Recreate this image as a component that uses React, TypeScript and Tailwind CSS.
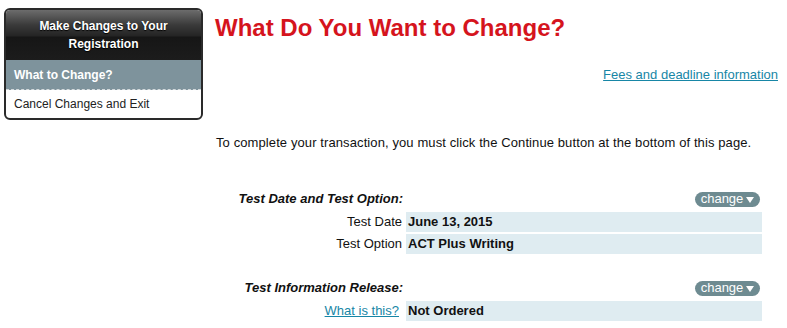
import React from 'react';

const font = "font-['Liberation_Sans',Arial,Helvetica,sans-serif]";

interface Row {
  label: React.ReactNode;
  value: string;
}

const ChangePill: React.FC = () => (
  <span className="mr-[2px] flex h-[15px] w-[65px] items-center justify-center gap-[3px] rounded-full bg-[#6e8b91] text-[13px] leading-none text-white">
    <span className="-mt-[1px]">change</span>
    <svg width="8" height="6" viewBox="0 0 8 6" className="mt-[1px]">
      <path d="M0 0 H8 L4 6 Z" fill="#fff" />
    </svg>
  </span>
);

const Section: React.FC<{ title: string; rows: Row[]; className?: string }> = ({ title, rows, className }) => (
  <div className={`ml-[25px] w-[522px] ${className ?? ''}`}>
    <div className="grid h-[16px] grid-cols-[164px_356px] items-center gap-x-[2px]">
      <div className="flex justify-end pr-[1px]">
        <span className="whitespace-nowrap text-[13px] font-bold italic leading-[16px] text-[#111]">{title}</span>
      </div>
      <div className="flex justify-end">
        <ChangePill />
      </div>
    </div>
    <div className="mt-[5px] grid grid-cols-[164px_356px] gap-[2px]">
      {rows.map((row, i) => (
        <React.Fragment key={i}>
          <div className="pr-[2px] text-right text-[13px] leading-[20px] text-[#111]">{row.label}</div>
          <div className="bg-[#dfecf1] pl-[2px] text-[13px] font-bold leading-[20px] text-[#111]">{row.value}</div>
        </React.Fragment>
      ))}
    </div>
  </div>
);

export default function App() {
  return (
    <div className={`flex min-h-[328px] w-[787px] items-start bg-white ${font}`}>
      {/* Side menu */}
      <div className="ml-[4px] mt-[8px] w-[199px] overflow-hidden rounded-[6px] border-2 border-[#2a2a2a] bg-white">
        <div className="flex h-[50px] flex-col items-center justify-center bg-[linear-gradient(to_bottom,#6c6c6c_0%,#3a3a3a_30%,#242424_52%,#161616_54%,#1c1c1c_100%)] text-center text-[12px] font-bold leading-[18px] text-white [text-shadow:0_1px_1px_#000]">
          <span>Make Changes to Your</span>
          <span>Registration</span>
        </div>
        <div className="flex h-[30px] items-center border-b border-dashed border-[#d3d9dc] bg-[#7e939c] pl-[8px] text-[12px] font-bold text-white">
          What to Change?
        </div>
        <div className="flex h-[28px] items-center pl-[8px] text-[12px] text-[#222]">
          Cancel Changes and Exit
        </div>
      </div>

      {/* Main content */}
      <div className="ml-[12px] w-[563px] pt-[14px]">
        <h1 className="text-[24px] font-bold leading-[28px] text-[#d5141d]">What Do You Want to Change?</h1>
        <div className="mt-[25px] flex justify-end">
          <a href="#" className="text-[13px] leading-[16px] text-[#1786a6] underline">
            Fees and deadline information
          </a>
        </div>
        <p className="mt-[52px] pl-[1px] text-[13px] leading-[16px] tracking-[0.1px] text-[#111]">
          To complete your transaction, you must click the Continue button at the bottom of this page.
        </p>

        <Section
          className="mt-[40px]"
          title="Test Date and Test Option:"
          rows={[
            { label: 'Test Date', value: 'June 13, 2015' },
            { label: 'Test Option', value: 'ACT Plus Writing' },
          ]}
        />

        <Section
          className="mt-[26px]"
          title="Test Information Release:"
          rows={[
            {
              label: (
                <a href="#" className="mr-[3px] text-[#1786a6] underline">
                  What is this?
                </a>
              ),
              value: 'Not Ordered',
            },
          ]}
        />
      </div>
    </div>
  );
}
